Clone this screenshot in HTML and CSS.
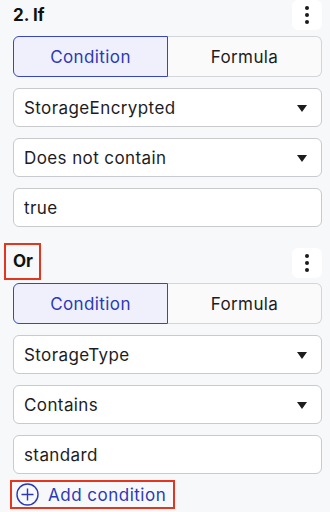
FILE: index.html
```html
<!DOCTYPE html>
<html>
<head>
<meta charset="utf-8">
<link rel="stylesheet" href="styles.css">
</head>
<body>
<div class="wrap">
  <div class="header">
    <div class="title">2. If</div>
    <div class="kebab"><span></span><span></span><span></span></div>
  </div>
  <div class="toggle">
    <div class="opt active">Condition</div>
    <div class="opt">Formula</div>
  </div>
  <div class="field select">StorageEncrypted<span class="arrow"></span></div>
  <div class="field select">Does not contain<span class="arrow"></span></div>
  <div class="field">true</div>

  <div class="header second">
    <div class="title or">Or</div>
    <div class="kebab"><span></span><span></span><span></span></div>
  </div>
  <div class="toggle">
    <div class="opt active">Condition</div>
    <div class="opt">Formula</div>
  </div>
  <div class="field select">StorageType<span class="arrow"></span></div>
  <div class="field select">Contains<span class="arrow"></span></div>
  <div class="field">standard</div>

  <div class="add">
    <svg class="plus" width="23" height="23" viewBox="0 0 23 23"><circle cx="11.5" cy="11.5" r="10.5" fill="none" stroke="#2b39b8" stroke-width="1.4"/><path d="M11.5 5.5v12M5.5 11.5h12" stroke="#2b39b8" stroke-width="1.4" fill="none"/></svg>
    <span>Add condition</span>
  </div>
</div>
</body>
</html>
```
FILE: styles.css
```css
html, body {
  margin: 0;
  padding: 0;
  background: #f7f8fa;
  font-family: Inter, "Noto Sans", sans-serif;
  color: #1d1d1f;
}
.wrap {
  padding: 0 8px 0 13px;
}
.header {
  display: flex;
  justify-content: space-between;
  align-items: center;
  height: 30px;
}
.header.second {
  margin-top: 21px;
}
.title {
  font-size: 17px;
  font-weight: 700;
  color: #111;
}
.title.or {
  margin-left: -9px;
  margin-top: -3px;
  padding: 0 6px 0 7px;
  height: 33px;
  line-height: 33px;
  border: 2px solid #e4351f;
}
.kebab {
  width: 30px;
  height: 30px;
  background: #fff;
  border-radius: 6px;
  display: flex;
  flex-direction: column;
  align-items: center;
  justify-content: center;
  gap: 2.5px;
}
.kebab span {
  width: 4.5px;
  height: 4.5px;
  border-radius: 50%;
  background: #1a1a1a;
}
.toggle {
  display: flex;
  margin-top: 6px;
  height: 41px;
}
.second + .toggle {
  margin-top: 5px;
}
.opt {
  flex: 1;
  display: flex;
  align-items: center;
  justify-content: center;
  font-size: 17px;
  letter-spacing: 0.4px;
  background: #fafafb;
  border: 1px solid #d4d5d9;
  border-left: none;
  border-radius: 0 6px 6px 0;
  color: #1d1d1f;
}
.opt.active {
  background: #eff0fc;
  border: 1px solid #3a45c4;
  border-radius: 6px 0 0 6px;
  color: #2b39b8;
}
.field {
  position: relative;
  box-sizing: border-box;
  margin-top: 11px;
  height: 39px;
  display: flex;
  align-items: center;
  padding-left: 10px;
  background: #fff;
  border: 1px solid #c9cacd;
  border-radius: 6px;
  font-size: 17px;
  letter-spacing: 0.4px;
  color: #1d1d1f;
}
.arrow {
  position: absolute;
  right: 14px;
  top: 16px;
  width: 0;
  height: 0;
  border-left: 5px solid transparent;
  border-right: 5px solid transparent;
  border-top: 7px solid #1d1d1f;
}
.add {
  display: inline-flex;
  align-items: center;
  gap: 9px;
  margin-top: 6px;
  margin-left: -3px;
  padding: 0 7px 0 4px;
  height: 25px;
  border: 2px solid #e4351f;
  color: #2b39b8;
  font-size: 17px;
  letter-spacing: 0.5px;
}
.plus {
  display: block;
}
```
